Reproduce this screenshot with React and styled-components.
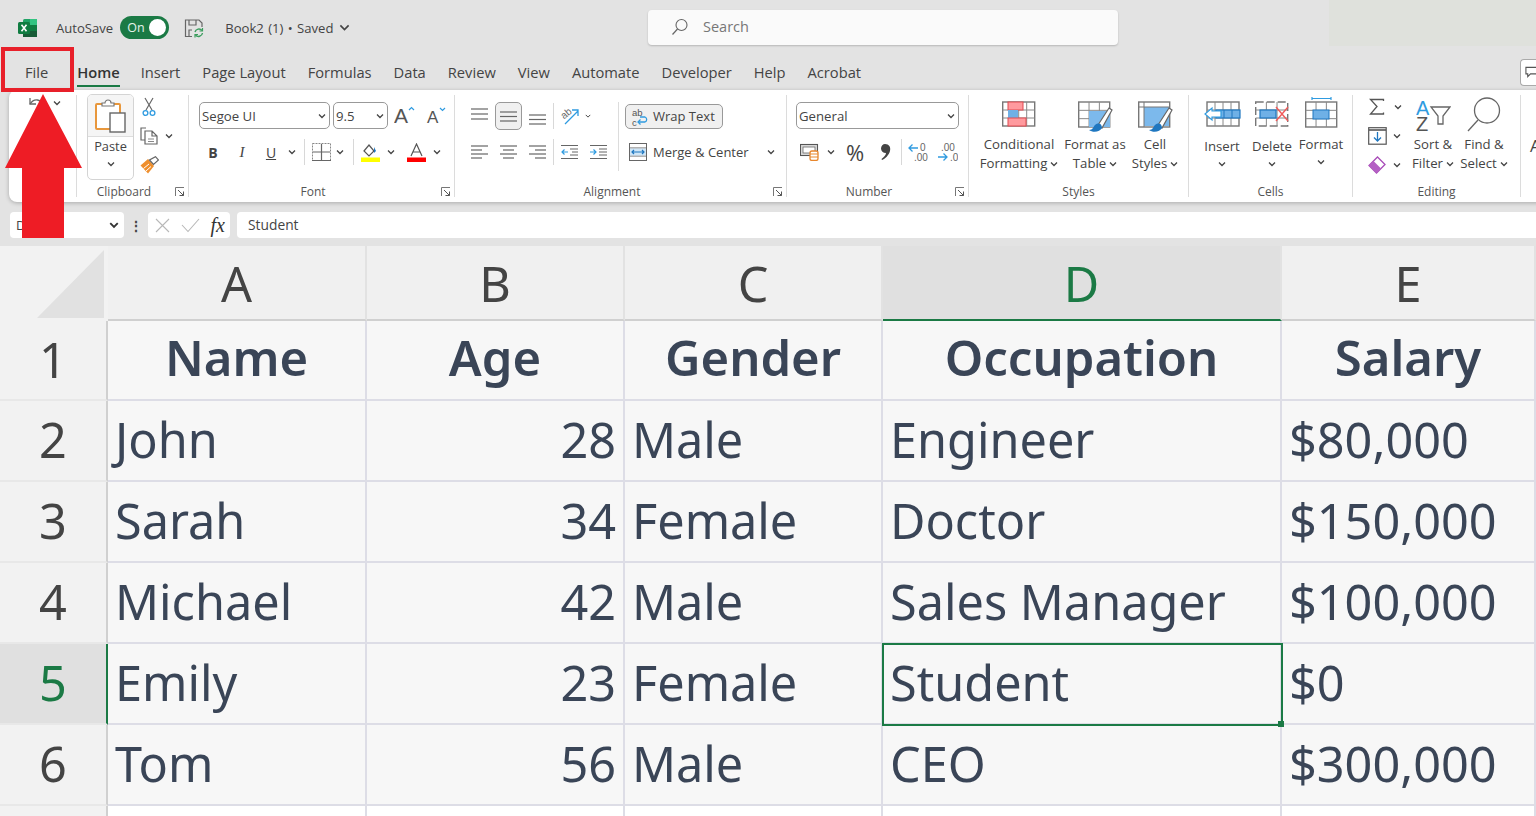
import React from 'react';
import styled, { createGlobalStyle } from 'styled-components';

const GREEN = '#1b7a45';
const BLUE = '#2f9be0';
const DKBLUE = '#1f77c0';
const ICON_FONT = 'Liberation Sans, sans-serif';

const GlobalStyle = createGlobalStyle`
    html, body {
        margin: 0;
        padding: 0;
        background: #e3e3e3;
    }
    * {
        box-sizing: border-box;
    }
`;

const Chevron = ({ size = 8, color = '#444', sw = 1.3 }) => (
    <svg width={size} height={size} viewBox="0 0 8 8" fill="none">
        <path d="M1 2.5 L4 5.5 L7 2.5" stroke={color} strokeWidth={sw} />
    </svg>
);

const ExcelLogo = () => (
    <svg width="20" height="20" viewBox="0 0 20 20">
        <rect x="5" y="1" width="14" height="18" rx="1.5" fill="#21a366" />
        <rect x="12" y="1" width="7" height="6" fill="#33c481" />
        <rect x="5" y="13" width="14" height="6" fill="#185c37" />
        <rect x="12" y="7" width="7" height="6" fill="#107c41" />
        <rect x="0" y="4" width="12" height="12" rx="1.5" fill="#107c41" />
        <path d="M3.5 6.8 L8.5 13.2 M8.5 6.8 L3.5 13.2" stroke="#fff" strokeWidth="1.6" />
    </svg>
);

const SaveIcon = () => (
    <svg width="20" height="20" viewBox="0 0 20 20" fill="none">
        <path d="M8 18.5 H1.5 V2 H15 L18 5 V9" stroke="#666" strokeWidth="1.2" />
        <path d="M5 2 V7 H12 V2 M5 18 V12 H8" stroke="#666" strokeWidth="1.2" />
        <path d="M11 14 A4 4 0 0 1 18 12.5 M18.5 15 A4 4 0 0 1 11.5 17" stroke="#3a9d5d" strokeWidth="1.4" />
        <path d="M18.5 10 V13 H15.5 M11 19.5 V16.5 H14" stroke="#3a9d5d" strokeWidth="1.2" />
    </svg>
);

const SearchIcon = () => (
    <svg width="18" height="18" viewBox="0 0 18 18" fill="none">
        <circle cx="10.5" cy="7" r="5.5" stroke="#666" strokeWidth="1.1" />
        <path d="M6.5 11 L1.5 16.5" stroke="#666" strokeWidth="1.2" />
    </svg>
);

const CommentIcon = () => (
    <svg width="12" height="14" viewBox="0 0 12 14" fill="none">
        <path d="M1 2 H16 V9 H6 L3 12 V9 H1 Z" stroke="#555" strokeWidth="1.2" />
    </svg>
);

const UndoIcon = () => (
    <svg width="18" height="12" viewBox="0 0 18 12" fill="none">
        <path d="M2 1 V7 H8" stroke="#666" strokeWidth="1.3" />
        <path d="M2 7 C6 1 13 1 17 11" stroke="#666" strokeWidth="1.3" />
    </svg>
);

const PasteIcon = () => (
    <svg width="33" height="34" viewBox="0 0 33 34" fill="none">
        <rect x="2" y="5" width="24" height="25" rx="1" stroke="#e8973c" strokeWidth="2" fill="#fff" />
        <path d="M8 7 V4 H11 A3 3 0 0 1 17 4 H20 V7 Z" stroke="#777" strokeWidth="1.2" fill="#fff" />
        <rect x="16" y="14" width="15" height="19" fill="#fff" stroke="#666" strokeWidth="1.4" />
    </svg>
);

const ScissorsIcon = () => (
    <svg width="14" height="20" viewBox="0 0 14 20" fill="none">
        <path d="M3 1 L10 13 M11 1 L4 13" stroke="#666" strokeWidth="1.2" />
        <circle cx="3.5" cy="16" r="2.4" stroke={BLUE} strokeWidth="1.3" />
        <circle cx="10.5" cy="16" r="2.4" stroke={BLUE} strokeWidth="1.3" />
    </svg>
);

const CopyIcon = () => (
    <svg width="18" height="18" viewBox="0 0 18 18" fill="none">
        <path d="M6 1 H1 V13 H5" stroke="#666" strokeWidth="1.2" />
        <path d="M5 4 H12 L17 9 V17 H5 Z M12 4 V9 H17" stroke="#666" strokeWidth="1.2" fill="#fff" />
        <path d="M8 12 H14 M8 14.5 H14" stroke="#888" strokeWidth="1" />
    </svg>
);

const BrushIcon = () => (
    <svg width="19" height="18" viewBox="0 0 19 18" fill="none">
        <path d="M0.5 9.5 L8 3 L14 10 L8 17.5 Z" fill="#ef8f2d" />
        <path d="M3.5 12.5 L9 8 M6 15 L11 10.5" stroke="#fff" strokeWidth="1" />
        <path d="M9.5 4 L13.5 8.5 L18.5 4 L15.5 0.7 Z" fill="#fff" stroke="#666" strokeWidth="1.2" />
    </svg>
);

const Launcher = () => (
    <svg width="10" height="10" viewBox="0 0 10 10" fill="none">
        <path d="M0.5 9 V0.5 H9" stroke="#777" strokeWidth="1" />
        <path d="M3 3 L8.5 8.5 M8.5 4.5 V8.5 H4.5" stroke="#555" strokeWidth="1" />
    </svg>
);

const BordersIcon = () => (
    <svg width="19" height="18" viewBox="0 0 19 18" fill="none">
        <rect x="0.5" y="0.5" width="18" height="17" stroke="#888" strokeWidth="1" strokeDasharray="2 1" />
        <path d="M9.5 1 V17 M1 9 H18" stroke="#666" strokeWidth="1.2" />
        <path d="M0 17.5 H19" stroke="#666" strokeWidth="1" />
    </svg>
);

const FillIcon = () => (
    <svg width="19" height="19" viewBox="0 0 19 19" fill="none">
        <path d="M3 8 L8 2 L13 8 L8 13 Z" stroke="#555" strokeWidth="1.2" fill="#fff" />
        <path d="M13 4 L15 8 L13 10 Z" fill={DKBLUE} />
        <rect x="0" y="14.5" width="19" height="4.5" fill="#ffff00" />
    </svg>
);

const FontColorIcon = () => (
    <svg width="19" height="19" viewBox="0 0 19 19" fill="none">
        <path d="M4 13 L9.5 1 L15 13 M6 9 H13" stroke="#555" strokeWidth="1.2" />
        <rect x="0" y="14.5" width="19" height="4.5" fill="#ff0000" />
    </svg>
);

const SIZE_ARROW = { up: 'M15 8 L17.5 5.5 L20 8', down: 'M15 6 L17.5 8.5 L20 6' };

const FontSizeIcon = ({ dir, size }) => (
    <svg width="21" height="28" viewBox="0 0 21 28" fill="none">
        <text x={size > 18 ? 0 : 2} y="21" fontFamily={ICON_FONT} fontSize={size} fill="#555">A</text>
        <path d={SIZE_ARROW[dir]} stroke={BLUE} strokeWidth="1.2" />
    </svg>
);

const ALIGN_V = { top: [2, 7, 12], mid: [5, 9.5, 14], bottom: [8, 12.5, 17] };

const VAlignIcon = ({ pos }) => (
    <svg width="17" height="18" viewBox="0 0 17 18" fill="none">
        {ALIGN_V[pos].map((y) => (
            <path key={y} d={`M0 ${y} H17`} stroke="#666" strokeWidth="1.2" />
        ))}
    </svg>
);

const ALIGN_H = {
    left: ['M0 2 H17', 'M0 6 H11', 'M0 10 H17', 'M0 14 H11'],
    center: ['M0 2 H17', 'M3 6 H14', 'M0 10 H17', 'M3 14 H14'],
    right: ['M0 2 H17', 'M6 6 H17', 'M0 10 H17', 'M6 14 H17'],
};

const HAlignIcon = ({ pos }) => (
    <svg width="17" height="16" viewBox="0 0 17 16" fill="none">
        {ALIGN_H[pos].map((d) => (
            <path key={d} d={d} stroke="#666" strokeWidth="1.2" />
        ))}
    </svg>
);

const OrientationIcon = () => (
    <svg width="24" height="26" viewBox="0 0 24 26" fill="none">
        <text x="3" y="14" fontFamily={ICON_FONT} fontSize="10" fill="#666" transform="rotate(-40 8 11)">ab</text>
        <path d="M7 21 L20 8 M14 7 H20 V13" stroke={BLUE} strokeWidth="1.3" />
    </svg>
);

const IndentIcon = ({ dir }) => (
    <svg width="17" height="16" viewBox="0 0 17 16" fill="none">
        <path d="M0 1.5 H17 M0 14.5 H17" stroke="#666" strokeWidth="1.2" />
        {dir === 'dec' ? (
            <>
                <path d="M9 5 H17 M11 8 H17 M9 11 H17" stroke="#666" strokeWidth="1" />
                <path d="M1 8 H7 M3.5 5.5 L1 8 L3.5 10.5" stroke={BLUE} strokeWidth="1.2" />
            </>
        ) : (
            <>
                <path d="M9 5 H17 M9 8 H17 M9 11 H17" stroke="#666" strokeWidth="1" />
                <path d="M0 8 H6 M3.5 5.5 L6 8 L3.5 10.5" stroke={BLUE} strokeWidth="1.2" />
            </>
        )}
    </svg>
);

const WrapIcon = () => (
    <svg width="18" height="22" viewBox="0 0 18 22" fill="none">
        <text x="1" y="9.5" fontFamily={ICON_FONT} fontSize="9.5" fill="#555">ab</text>
        <text x="1" y="20" fontFamily={ICON_FONT} fontSize="9.5" fill="#555">c</text>
        <path d="M7 16 H14 A2.7 2.7 0 0 0 14 11 H9" stroke={BLUE} strokeWidth="1.3" />
        <path d="M9.5 13.5 L7 16 L9.5 18.5" stroke={BLUE} strokeWidth="1.3" />
    </svg>
);

const MergeIcon = () => (
    <svg width="18" height="18" viewBox="0 0 18 18" fill="none">
        <rect x="0.5" y="0.5" width="17" height="17" stroke="#666" strokeWidth="1" />
        <path d="M0 5 H18 M0 13 H18" stroke="#666" strokeWidth="1" />
        <rect x="1" y="5.5" width="16" height="7" fill="#cfe6f7" />
        <path d="M3 9 H15 M5 7 L3 9 L5 11 M13 7 L15 9 L13 11" stroke={DKBLUE} strokeWidth="1.2" />
    </svg>
);

const AccountingIcon = () => (
    <svg width="19" height="18" viewBox="0 0 19 18" fill="none">
        <rect x="0.5" y="1.5" width="17" height="11" fill="#ddd" stroke="#555" strokeWidth="1.1" />
        <rect x="3" y="4" width="12" height="6" fill="#fff" stroke="#666" strokeWidth="0.8" />
        <rect x="10" y="8" width="8" height="9.5" rx="2" fill="#fff" stroke="#e8872d" strokeWidth="1.3" />
        <path d="M10 11 H18 M10 14 H18" stroke="#e8872d" strokeWidth="1.1" />
    </svg>
);

const CommaIcon = () => (
    <svg width="12" height="18" viewBox="0 0 12 18">
        <path d="M6 1 C10 1 12 4 11 8 C10 12 6 16 3 17 L2.5 16 C5 14 7 12 7 10 C4 10 2 8 2 5.5 C2 3 4 1 6 1 Z" fill="#444" />
    </svg>
);

const DecimalIcon = ({ dir }) => (
    <svg width="22" height="24" viewBox="0 0 22 24" fill="none">
        {dir === 'inc' ? (
            <>
                <text x="13" y="11" fontFamily={ICON_FONT} fontSize="10" fill="#666">0</text>
                <text x="7" y="21" fontFamily={ICON_FONT} fontSize="10" fill="#666">.00</text>
                <path d="M2 8 H11 M5.5 4.5 L2 8 L5.5 11.5" stroke={BLUE} strokeWidth="1.3" />
            </>
        ) : (
            <>
                <text x="5" y="11" fontFamily={ICON_FONT} fontSize="10" fill="#666">.00</text>
                <text x="14" y="21" fontFamily={ICON_FONT} fontSize="10" fill="#666">.0</text>
                <path d="M2 17 H11 M7.5 13.5 L11 17 L7.5 20.5" stroke={BLUE} strokeWidth="1.3" />
            </>
        )}
    </svg>
);

// cell grid used by every big icon in Styles and Cells
const SheetGrid = ({ x = 0, y = 5, w = 33, h = 25, cols = 3, rows = 3, dashed }) => {
    const lines = [];
    for (let i = 1; i < cols; i++) lines.push(`M${x + (w * i) / cols} ${y} V${y + h}`);
    for (let i = 1; i < rows; i++) lines.push(`M${x} ${y + (h * i) / rows} H${x + w}`);
    return (
        <>
            <rect x={x} y={y} width={w} height={h} fill="#fff" stroke="#777" strokeWidth="1.4" strokeDasharray={dashed ? '8 3' : undefined} />
            <path d={lines.join(' ')} stroke="#888" strokeWidth="1" />
        </>
    );
};

const ConditionalIcon = () => (
    <svg width="34" height="38" viewBox="0 0 34 38" fill="none">
        <SheetGrid x={0.7} w={32} h={24} cols={4} />
        <rect x="6" y="5" width="15" height="8" fill="#ff9a9e" stroke="#e04a50" strokeWidth="1" />
        <rect x="6" y="13" width="10" height="8" fill="#6fb0e6" />
        <rect x="6" y="21" width="18" height="8" fill="#ff9a9e" stroke="#e04a50" strokeWidth="1" />
    </svg>
);

const Paintbrush = () => (
    <>
        <path d="M20 28 L31 11 L34 13 L24 31 Z" fill="#fff" stroke="#666" strokeWidth="1.2" />
        <path d="M17 28 C21 25 24 27 24 31 C22 35 15 36 11 33 C15 33 15 30 17 28 Z" fill={DKBLUE} />
    </>
);

const TableIcon = () => (
    <svg width="35" height="38" viewBox="0 0 35 38" fill="none">
        <SheetGrid x={0.7} w={31} h={25} cols={3} />
        <rect x="11" y="14" width="21" height="16" fill="#7cb9ec" />
        <Paintbrush />
    </svg>
);

const CellStyleIcon = () => (
    <svg width="35" height="38" viewBox="0 0 35 38" fill="none">
        <rect x="0.7" y="5" width="31" height="25" fill="#fff" stroke="#777" strokeWidth="1.4" />
        <rect x="6" y="10" width="25" height="19" fill="#7cb9ec" />
        <path d="M0 10 H32 M6 5 V30" stroke="#777" strokeWidth="1" />
        <Paintbrush />
    </svg>
);

const InsertCellsIcon = () => (
    <svg width="37" height="38" viewBox="0 0 37 38" fill="none">
        <SheetGrid x={3} w={32} h={24} cols={4} />
        <rect x="12" y="13" width="24" height="8" fill="#6fb0e6" stroke={DKBLUE} strokeWidth="1.2" />
        <path d="M20 13 V21 M28 13 V21" stroke={DKBLUE} strokeWidth="1" />
        <path d="M17 14 H8 V11 L1 17 L8 23 V20 H17 Z" fill="#fff" stroke={BLUE} strokeWidth="1.2" />
    </svg>
);

const DeleteCellsIcon = () => (
    <svg width="35" height="38" viewBox="0 0 35 38" fill="none">
        <SheetGrid x={0.7} w={32} h={24} cols={3} dashed />
        <rect x="5" y="13" width="16" height="8" fill="#6fb0e6" stroke={DKBLUE} strokeWidth="1.2" />
        <path d="M21 10 L33 24 M33 10 L21 24" stroke="#f05a5a" strokeWidth="1.4" />
    </svg>
);

const FormatCellsIcon = () => (
    <svg width="33" height="38" viewBox="0 0 33 38" fill="none">
        <SheetGrid x={0.7} w={31} h={25} cols={3} />
        <rect x="8" y="13" width="16" height="9" fill="#6fb0e6" stroke={DKBLUE} strokeWidth="1" />
        <path d="M7 0 V3 M26 0 V3 M7 1.5 H26" stroke={BLUE} strokeWidth="1.2" />
    </svg>
);

const SumIcon = () => (
    <svg width="16" height="18" viewBox="0 0 16 18" fill="none">
        <path d="M14.5 3 V1.5 H1.5 L8 8.5 L1.5 16 H14.5 V14.5" stroke="#555" strokeWidth="1.3" />
    </svg>
);

const FillDownIcon = () => (
    <svg width="19" height="18" viewBox="0 0 19 18" fill="none">
        <rect x="0.7" y="0.7" width="17.5" height="16.5" stroke="#555" strokeWidth="1.2" />
        <path d="M1 3 H18" stroke="#555" strokeWidth="1.6" />
        <path d="M9.5 5 V14 M6 10.5 L9.5 14 L13 10.5" stroke={DKBLUE} strokeWidth="1.3" />
    </svg>
);

const EraserIcon = () => (
    <svg width="18" height="18" viewBox="0 0 18 18" fill="none">
        <path d="M9.5 1 L17 8.5 L8.5 17 L1 9.5 Z" fill="#fff" stroke="#a84bb8" strokeWidth="1.3" />
        <path d="M5.5 5 L13 12.5 L8.5 17 L1 9.5 Z" fill="#b460c4" />
    </svg>
);

const SortFilterIcon = () => (
    <svg width="35" height="40" viewBox="0 0 35 40" fill="none">
        <text x="0" y="17" fontFamily={ICON_FONT} fontSize="20" fill={BLUE}>A</text>
        <text x="0" y="33" fontFamily={ICON_FONT} fontSize="20" fill="#555">Z</text>
        <path d="M15 9 H34 L27 18 V26 H22 V18 Z" stroke="#666" strokeWidth="1.3" />
    </svg>
);

const FindIcon = () => (
    <svg width="34" height="35" viewBox="0 0 34 35" fill="none">
        <circle cx="20" cy="13.5" r="12.5" stroke="#666" strokeWidth="1.3" />
        <path d="M11 23 L1 34" stroke="#666" strokeWidth="1.3" />
    </svg>
);

const CancelIcon = () => (
    <svg width="15" height="15" viewBox="0 0 15 15" fill="none">
        <path d="M1 1 L14 14 M14 1 L1 14" stroke="#b8b8b8" strokeWidth="1.1" />
    </svg>
);

const EnterIcon = () => (
    <svg width="19" height="15" viewBox="0 0 19 15" fill="none">
        <path d="M1 7 L7 13.5 L18 1" stroke="#b8b8b8" strokeWidth="1.1" />
    </svg>
);

const COLUMNS = ['A', 'B', 'C', 'D', 'E'];
const ROWS = [
    ['Name', 'Age', 'Gender', 'Occupation', 'Salary'],
    ['John', '28', 'Male', 'Engineer', '$80,000'],
    ['Sarah', '34', 'Female', 'Doctor', '$150,000'],
    ['Michael', '42', 'Male', 'Sales Manager', '$100,000'],
    ['Emily', '23', 'Female', 'Student', '$0'],
    ['Tom', '56', 'Male', 'CEO', '$300,000'],
];
const TABS = ['Insert', 'Page Layout', 'Formulas', 'Data', 'Review', 'View', 'Automate', 'Developer', 'Help', 'Acrobat'];

export default function App() {
    return (
        <PageStyled>
            <GlobalStyle />
            <TitleBarStyled>
                <TitleLeftStyled>
                    <ExcelLogo />
                    <AutoSaveStyled>AutoSave</AutoSaveStyled>
                    <ToggleStyled>
                        On
                        <KnobStyled />
                    </ToggleStyled>
                    <SaveSlotStyled>
                        <SaveIcon />
                    </SaveSlotStyled>
                    <BookStyled>Book2 (1) • Saved</BookStyled>
                    <Chevron size={11} sw={1.2} />
                </TitleLeftStyled>
                <SearchBoxStyled>
                    <SearchIcon />
                    <SearchTextStyled>Search</SearchTextStyled>
                </SearchBoxStyled>
                <PatchStyled />
            </TitleBarStyled>

            <TabBarStyled>
                <TabStyled $file>File</TabStyled>
                <TabStyled $active>Home</TabStyled>
                {TABS.map((tab) => (
                    <TabStyled key={tab}>{tab}</TabStyled>
                ))}
                <CommentButtonStyled>
                    <CommentIcon />
                </CommentButtonStyled>
            </TabBarStyled>

            <RibbonStyled>
                <GroupStyled $w={68}>
                    <UndoRowStyled>
                        <UndoIcon />
                        <Chevron />
                    </UndoRowStyled>
                </GroupStyled>

                <GroupStyled $w={112}>
                    <GroupBodyStyled>
                        <PasteButtonStyled>
                            <PasteTopStyled>
                                <PasteIcon />
                            </PasteTopStyled>
                            <PasteLabelStyled>Paste</PasteLabelStyled>
                            <Chevron />
                        </PasteButtonStyled>
                        <StackStyled $left={5}>
                            <StackRowStyled>
                                <Slot $w={20}><ScissorsIcon /></Slot>
                            </StackRowStyled>
                            <StackRowStyled>
                                <Slot $w={20}><CopyIcon /></Slot>
                                <Slot $w={20}><Chevron /></Slot>
                            </StackRowStyled>
                            <StackRowStyled>
                                <Slot $w={20}><BrushIcon /></Slot>
                            </StackRowStyled>
                        </StackStyled>
                    </GroupBodyStyled>
                    <GroupFooter label="Clipboard" launcher />
                </GroupStyled>

                <GroupStyled $w={266}>
                    <RowsStyled $left={10}>
                        <TopRowStyled>
                            <SelectStyled $w={131}>Segoe UI<Chevron /></SelectStyled>
                            <SelectStyled $w={55} $gap={3}>9.5<Chevron /></SelectStyled>
                            <Slot $w={32}><FontSizeIcon dir="up" size={21} /></Slot>
                            <Slot $w={30}><FontSizeIcon dir="down" size={17} /></Slot>
                        </TopRowStyled>
                        <BottomRowStyled>
                            <Slot $w={28}><BoldGlyphStyled>B</BoldGlyphStyled></Slot>
                            <Slot $w={30}><ItalicGlyphStyled>I</ItalicGlyphStyled></Slot>
                            <Slot $w={28}><UnderGlyphStyled>U</UnderGlyphStyled></Slot>
                            <Slot $w={14}><Chevron /></Slot>
                            <Slot $w={10}><DividerStyled /></Slot>
                            <Slot $w={24}><BordersIcon /></Slot>
                            <Slot $w={14}><Chevron /></Slot>
                            <Slot $w={12}><DividerStyled /></Slot>
                            <Slot $w={22}><FillIcon /></Slot>
                            <Slot $w={20}><Chevron /></Slot>
                            <Slot $w={30}><FontColorIcon /></Slot>
                            <Slot $w={12}><Chevron /></Slot>
                        </BottomRowStyled>
                    </RowsStyled>
                    <GroupFooter label="Font" launcher />
                </GroupStyled>

                <GroupStyled $w={332}>
                    <GroupBodyStyled>
                        <AlignColumnStyled>
                            <TopRowStyled>
                                <Slot $w={28}><VAlignIcon pos="top" /></Slot>
                                <Slot $w={30}><SelectedBoxStyled><VAlignIcon pos="mid" /></SelectedBoxStyled></Slot>
                                <Slot $w={28}><VAlignIcon pos="bottom" /></Slot>
                                <Slot $w={4}><DividerStyled /></Slot>
                                <Slot $w={30}><OrientationIcon /></Slot>
                                <Slot $w={6}><Chevron /></Slot>
                            </TopRowStyled>
                            <BottomRowStyled>
                                <Slot $w={28}><HAlignIcon pos="left" /></Slot>
                                <Slot $w={30}><HAlignIcon pos="center" /></Slot>
                                <Slot $w={28}><HAlignIcon pos="right" /></Slot>
                                <Slot $w={4}><DividerStyled /></Slot>
                                <Slot $w={28}><IndentIcon dir="dec" /></Slot>
                                <Slot $w={30}><IndentIcon dir="inc" /></Slot>
                            </BottomRowStyled>
                        </AlignColumnStyled>
                        <WrapColumnStyled>
                            <WrapButtonStyled>
                                <WrapIcon />
                                <span>Wrap Text</span>
                            </WrapButtonStyled>
                            <MergeRowStyled>
                                <MergeIcon />
                                <MergeTextStyled>Merge &amp; Center</MergeTextStyled>
                                <Chevron />
                            </MergeRowStyled>
                        </WrapColumnStyled>
                    </GroupBodyStyled>
                    <GroupFooter label="Alignment" launcher />
                </GroupStyled>

                <GroupStyled $w={182}>
                    <RowsStyled $left={9}>
                        <TopRowStyled>
                            <SelectStyled $w={163}>General<Chevron /></SelectStyled>
                        </TopRowStyled>
                        <BottomRowStyled>
                            <Slot $w={26}><AccountingIcon /></Slot>
                            <Slot $w={18}><Chevron /></Slot>
                            <Slot $w={30}><PercentStyled>%</PercentStyled></Slot>
                            <Slot $w={30}><CommaIcon /></Slot>
                            <Slot $w={2}><DividerStyled /></Slot>
                            <Slot $w={32}><DecimalIcon dir="inc" /></Slot>
                            <Slot $w={26}><DecimalIcon dir="dec" /></Slot>
                        </BottomRowStyled>
                    </RowsStyled>
                    <GroupFooter label="Number" launcher />
                </GroupStyled>

                <GroupStyled $w={220}>
                    <GroupBodyStyled $left={3}>
                        <LargeButtonStyled $w={94}>
                            <LargeIconStyled><ConditionalIcon /></LargeIconStyled>
                            Conditional
                            <span>Formatting <Chevron /></span>
                        </LargeButtonStyled>
                        <LargeButtonStyled $w={58}>
                            <LargeIconStyled><TableIcon /></LargeIconStyled>
                            Format as
                            <span>Table <Chevron /></span>
                        </LargeButtonStyled>
                        <LargeButtonStyled $w={62}>
                            <LargeIconStyled><CellStyleIcon /></LargeIconStyled>
                            Cell
                            <span>Styles <Chevron /></span>
                        </LargeButtonStyled>
                    </GroupBodyStyled>
                    <GroupFooter label="Styles" />
                </GroupStyled>

                <GroupStyled $w={164}>
                    <GroupBodyStyled $left={8}>
                        <LargeButtonStyled $w={50} $drop={2}>
                            <LargeIconStyled><InsertCellsIcon /></LargeIconStyled>
                            Insert
                            <ChevronLineStyled><Chevron /></ChevronLineStyled>
                        </LargeButtonStyled>
                        <LargeButtonStyled $w={50} $drop={2}>
                            <LargeIconStyled><DeleteCellsIcon /></LargeIconStyled>
                            Delete
                            <ChevronLineStyled><Chevron /></ChevronLineStyled>
                        </LargeButtonStyled>
                        <LargeButtonStyled $w={48}>
                            <LargeIconStyled><FormatCellsIcon /></LargeIconStyled>
                            Format
                            <ChevronLineStyled><Chevron /></ChevronLineStyled>
                        </LargeButtonStyled>
                    </GroupBodyStyled>
                    <GroupFooter label="Cells" />
                </GroupStyled>

                <GroupStyled $w={168}>
                    <GroupBodyStyled>
                        <StackStyled $left={12} $w={42}>
                            <StackRowStyled>
                                <Slot $w={24}><SumIcon /></Slot>
                                <Slot $w={18}><Chevron /></Slot>
                            </StackRowStyled>
                            <StackRowStyled>
                                <Slot $w={24}><FillDownIcon /></Slot>
                                <Slot $w={16}><Chevron /></Slot>
                            </StackRowStyled>
                            <StackRowStyled>
                                <Slot $w={24}><EraserIcon /></Slot>
                                <Slot $w={16}><Chevron /></Slot>
                            </StackRowStyled>
                        </StackStyled>
                        <LargeButtonStyled $w={52}>
                            <LargeIconStyled $top={1}><SortFilterIcon /></LargeIconStyled>
                            Sort &amp;
                            <span>Filter <Chevron /></span>
                        </LargeButtonStyled>
                        <LargeButtonStyled $w={50}>
                            <LargeIconStyled $top={0}><FindIcon /></LargeIconStyled>
                            Find &amp;
                            <span>Select <Chevron /></span>
                        </LargeButtonStyled>
                    </GroupBodyStyled>
                    <GroupFooter label="Editing" />
                </GroupStyled>

                <GroupStyled $w={40}>
                    <NextGroupGlyphStyled>A</NextGroupGlyphStyled>
                </GroupStyled>
            </RibbonStyled>

            <FormulaBarStyled>
                <NameBoxStyled>
                    D
                    <Chevron size={10} color="#333" sw={1.5} />
                </NameBoxStyled>
                <DotsStyled>⋮</DotsStyled>
                <FormulaButtonsStyled>
                    <CancelIcon />
                    <EnterIcon />
                    <FxStyled>fx</FxStyled>
                </FormulaButtonsStyled>
                <FormulaInputStyled>Student</FormulaInputStyled>
            </FormulaBarStyled>

            <SheetStyled>
                <CornerStyled>
                    <CornerTriangleStyled />
                </CornerStyled>
                {COLUMNS.map((col) => (
                    <ColumnHeadStyled key={col} $selected={col === 'D'}>
                        {col}
                    </ColumnHeadStyled>
                ))}
                {ROWS.map((row, r) => (
                    <React.Fragment key={row[0]}>
                        <RowHeadStyled $selected={r === 4}>{r + 1}</RowHeadStyled>
                        {row.map((value, c) => (
                            <CellStyled key={c} $head={r === 0} $right={r > 0 && c === 1} $active={r === 4 && c === 3}>
                                {value}
                                {r === 4 && c === 3 && <FillHandleStyled />}
                            </CellStyled>
                        ))}
                    </React.Fragment>
                ))}
                <RowHeadStyled />
                {COLUMNS.map((col) => (
                    <EmptyCellStyled key={col} />
                ))}
            </SheetStyled>

            <FileHighlightStyled />
            <ArrowStyled width="78" height="146" viewBox="0 0 78 146">
                <polygon points="38,1 77,75 59,75 59,145 17,145 17,75 0,75" fill="#ee1c25" />
            </ArrowStyled>
        </PageStyled>
    );
}

function GroupFooter({ label, launcher }) {
    return (
        <FooterStyled>
            <GroupLabelStyled>{label}</GroupLabelStyled>
            {launcher && (
                <LauncherSlotStyled>
                    <Launcher />
                </LauncherSlotStyled>
            )}
        </FooterStyled>
    );
}

const PageStyled = styled.div`
    position: relative;
    display: flex;
    flex-direction: column;
    width: 1536px;
    height: 816px;
    overflow: hidden;
    background: #e3e3e3;
    font-family: 'Open Sans', 'Noto Sans', sans-serif;
    color: #444;
`;

const TitleBarStyled = styled.div`
    display: flex;
    flex: none;
    height: 55px;
`;

const TitleLeftStyled = styled.div`
    display: flex;
    align-items: center;
    width: 648px;
    height: 55px;
    padding-left: 18px;
`;

const AutoSaveStyled = styled.span`
    margin-left: 18px;
    font-size: 13.1px;
`;

const ToggleStyled = styled.div`
    position: relative;
    display: flex;
    align-items: center;
    width: 49px;
    height: 23px;
    margin-left: 7px;
    padding-left: 7px;
    border-radius: 12px;
    background: ${GREEN};
    color: #e6f3ea;
    font-size: 12.5px;
`;

const KnobStyled = styled.span`
    position: absolute;
    right: 3px;
    top: 3px;
    width: 17px;
    height: 17px;
    border-radius: 50%;
    background: #fff;
`;

const SaveSlotStyled = styled.div`
    display: flex;
    margin-left: 15px;
`;

const BookStyled = styled.span`
    margin: 0 6px 0 21px;
    font-size: 13.1px;
    word-spacing: 1px;
`;

const SearchBoxStyled = styled.div`
    display: flex;
    align-items: center;
    width: 470px;
    height: 35px;
    margin-top: 10px;
    padding: 0 0 2px 23px;
    border-radius: 4px;
    background: #fafafa;
    box-shadow: 0 1px 2px rgba(0, 0, 0, 0.2);
`;

const SearchTextStyled = styled.span`
    margin-left: 14px;
    color: #777;
    font-size: 14.5px;
`;

const PatchStyled = styled.div`
    width: 207px;
    height: 46px;
    margin-left: 211px;
    background: #dfe1dc;
`;

const TabBarStyled = styled.div`
    display: flex;
    flex: none;
    gap: 22px;
    align-items: center;
    height: 35px;
    padding: 0 0 1px 25px;
    font-size: 14.7px;
`;

const TabStyled = styled.div`
    position: relative;
    margin-right: ${(p) => (p.$file ? '7px' : p.$active ? '-1px' : '0')};
    font-weight: ${(p) => (p.$active ? 600 : 400)};
    color: ${(p) => (p.$active ? '#333' : '#444')};

    ${(p) =>
        p.$active &&
        `&::after {
            content: '';
            position: absolute;
            left: 0;
            right: 0;
            bottom: -5px;
            height: 2px;
            background: ${GREEN};
        }`}
`;

const CommentButtonStyled = styled.div`
    display: flex;
    align-items: center;
    width: 16px;
    height: 27px;
    margin-left: auto;
    padding-left: 4px;
    overflow: hidden;
    border: 1px solid #aaa;
    border-right: none;
    border-radius: 4px 0 0 4px;
    background: #fff;
`;

const RibbonStyled = styled.div`
    display: flex;
    flex: none;
    width: 1600px;
    height: 112px;
    margin-left: 9px;
    padding: 5px 0;
    border-radius: 8px;
    background: #fff;
    box-shadow: 0 1px 4px rgba(0, 0, 0, 0.25);
    font-size: 13.2px;
`;

const GroupStyled = styled.div`
    display: flex;
    flex: none;
    flex-direction: column;
    width: ${(p) => p.$w}px;
    border-right: 1px solid #dcdcdc;
`;

const GroupBodyStyled = styled.div`
    display: flex;
    flex: 1;
    padding-left: ${(p) => p.$left || 0}px;
`;

const RowsStyled = styled.div`
    flex: 1;
    padding-left: ${(p) => p.$left}px;
`;

const FooterStyled = styled.div`
    display: flex;
    flex: none;
    align-items: center;
    height: 14px;
    margin-bottom: -2px;
    line-height: 14px;
`;

const GroupLabelStyled = styled.div`
    flex: 1;
    text-align: center;
    font-size: 12px;
    color: #555;
`;

const LauncherSlotStyled = styled.div`
    display: flex;
    flex: none;
    justify-content: center;
    width: 17px;
`;

const UndoRowStyled = styled.div`
    display: flex;
    gap: 7px;
    align-items: center;
    padding: 2px 0 0 19px;
`;

const NextGroupGlyphStyled = styled.div`
    margin: 42px 0 0 9px;
    font-size: 17px;
    line-height: 1;
`;

const PasteButtonStyled = styled.div`
    display: flex;
    flex: none;
    flex-direction: column;
    align-items: center;
    width: 47px;
    height: 86px;
    margin: -1px 0 0 10px;
    overflow: hidden;
    border: 1px solid #d4d4d4;
    border-radius: 5px;
    line-height: 1;
`;

const PasteTopStyled = styled.div`
    display: flex;
    flex: none;
    justify-content: center;
    align-items: center;
    width: 100%;
    height: 42px;
    border-bottom: 1px solid #ddd;
    background: #f5f5f5;
`;

const PasteLabelStyled = styled.div`
    margin: 1px 0 6px;
    line-height: 16px;
    font-size: 12.8px;
`;

const StackStyled = styled.div`
    display: flex;
    flex: none;
    flex-direction: column;
    gap: 5px;
    width: ${(p) => (p.$w ? `${p.$w}px` : 'auto')};
    margin-left: ${(p) => p.$left}px;
`;

const StackRowStyled = styled.div`
    display: flex;
    align-items: center;
    height: 24px;
`;

const Slot = styled.div`
    display: flex;
    flex: none;
    justify-content: center;
    align-items: center;
    width: ${(p) => p.$w}px;
`;

const TopRowStyled = styled.div`
    display: flex;
    align-items: center;
    height: 27px;
    margin-top: 7px;
`;

const BottomRowStyled = styled.div`
    display: flex;
    align-items: center;
    height: 24px;
    margin-top: 11px;
`;

const SelectStyled = styled.div`
    display: flex;
    flex: none;
    justify-content: space-between;
    align-items: center;
    width: ${(p) => p.$w}px;
    height: 27px;
    margin-left: ${(p) => p.$gap || 0}px;
    padding: 0 3px 0 2px;
    border: 1px solid #999;
    border-radius: 5px;
    background: #fff;
    font-size: 13.2px;
`;

const DividerStyled = styled.div`
    flex: none;
    width: 1px;
    height: 26px;
    background: #d8d8d8;
`;

const BoldGlyphStyled = styled.span`
    font-size: 14px;
    font-weight: 700;
`;

const ItalicGlyphStyled = styled.span`
    font-family: 'Liberation Serif', serif;
    font-size: 15px;
    font-style: italic;
`;

const UnderGlyphStyled = styled.span`
    font-size: 14px;
    text-decoration: underline;
`;

const AlignColumnStyled = styled.div`
    flex: none;
    width: 164px;
    height: 69px;
    padding-left: 10px;
    border-right: 1px solid #dcdcdc;
    margin-top: 7px;

    & > div:first-child {
        margin-top: 0;
    }
`;

const SelectedBoxStyled = styled.div`
    display: flex;
    justify-content: center;
    align-items: center;
    width: 27px;
    height: 28px;
    border: 1px solid #999;
    border-radius: 5px;
    background: #f0f0f0;
`;

const WrapColumnStyled = styled.div`
    flex: none;
    padding-left: 6px;
`;

const WrapButtonStyled = styled.div`
    display: flex;
    gap: 4px;
    align-items: center;
    width: 98px;
    height: 25px;
    margin-top: 9px;
    padding-left: 5px;
    border: 1px solid #999;
    border-radius: 5px;
    background: #f0f0f0;
    font-size: 13px;

    & > span {
        margin-top: -2px;
    }
`;

const MergeRowStyled = styled.div`
    display: flex;
    align-items: center;
    height: 24px;
    margin-top: 11px;
    padding-left: 4px;
    font-size: 13px;
`;

const MergeTextStyled = styled.span`
    width: 114px;
    margin-left: 6px;
`;

const PercentStyled = styled.span`
    font-size: 22px;
    line-height: 1;
`;

const LargeButtonStyled = styled.div`
    display: flex;
    flex: none;
    flex-direction: column;
    align-items: center;
    width: ${(p) => p.$w}px;
    padding-top: 3px;
    line-height: 19px;
    white-space: nowrap;

    & > span {
        display: flex;
        gap: 3px;
        align-items: center;
        line-height: 19px;
    }

    & > div:first-child {
        margin-bottom: ${(p) => p.$drop || 0}px;
    }
`;

const LargeIconStyled = styled.div`
    display: flex;
    flex: none;
    justify-content: center;
    align-items: flex-start;
    height: 38px;
    margin-top: -1px;
    padding-top: ${(p) => p.$top || 0}px;
`;

const ChevronLineStyled = styled.div`
    display: flex;
    align-items: center;
    height: 16px;
`;

const FormulaBarStyled = styled.div`
    display: flex;
    flex: none;
    align-items: center;
    height: 26px;
    margin: 10px 0 8px 10px;
`;

const NameBoxStyled = styled.div`
    display: flex;
    justify-content: space-between;
    align-items: center;
    width: 114px;
    height: 26px;
    padding: 0 5px 0 6px;
    border-radius: 4px;
    background: #fff;
    font-size: 13px;
`;

const DotsStyled = styled.div`
    width: 24px;
    text-align: center;
    font-size: 14px;
    font-weight: 700;
`;

const FormulaButtonsStyled = styled.div`
    display: flex;
    justify-content: space-between;
    align-items: center;
    width: 82px;
    height: 26px;
    padding: 0 5px 0 7px;
    border-radius: 4px;
    background: #fff;
`;

const FxStyled = styled.span`
    font-family: 'Liberation Serif', serif;
    font-size: 20px;
    font-style: italic;
    color: #333;
`;

const FormulaInputStyled = styled.div`
    display: flex;
    flex: 1;
    align-items: center;
    height: 26px;
    margin-left: 7px;
    padding: 0 0 1px 11px;
    border-radius: 4px 0 0 4px;
    background: #fff;
    font-size: 13.8px;
`;

const SheetStyled = styled.div`
    display: grid;
    flex: 1;
    grid-template-columns: 108px 259px 258px 258px 399px 254px;
    grid-template-rows: 75px 80px repeat(5, 81px) 81px;
    overflow: hidden;
    background: #f7f7f7;
    font-family: 'Noto Sans', 'Open Sans', sans-serif;
    font-size: 48.6px;
    line-height: 1;
    color: #3a4557;
`;

const CornerStyled = styled.div`
    display: flex;
    justify-content: flex-end;
    padding: 4px 4px 0 0;
    background: #f2f2f2;
`;

const CornerTriangleStyled = styled.div`
    width: 67px;
    height: 68px;
    background: #e1e1e1;
    clip-path: polygon(100% 0, 100% 100%, 0 100%);
`;

const ColumnHeadStyled = styled.div`
    display: flex;
    justify-content: center;
    align-items: center;
    padding-top: 2px;
    border-right: 2px solid #e2e2e2;
    border-bottom: 2px solid ${(p) => (p.$selected ? GREEN : '#d0d0d0')};
    background: ${(p) => (p.$selected ? '#e0e0e0' : '#f0f0f0')};
    color: ${(p) => (p.$selected ? GREEN : '#444')};
`;

const RowHeadStyled = styled.div`
    display: flex;
    justify-content: center;
    align-items: center;
    padding-bottom: 2px;
    border-right: 2px solid ${(p) => (p.$selected ? GREEN : '#d0d0d0')};
    border-bottom: 2px solid #e8e8e8;
    background: ${(p) => (p.$selected ? '#e0e0e0' : '#f2f2f2')};
    color: ${(p) => (p.$selected ? GREEN : '#444')};
`;

const CellStyled = styled.div`
    position: relative;
    display: flex;
    justify-content: ${(p) => (p.$head ? 'center' : p.$right ? 'flex-end' : 'flex-start')};
    align-items: center;
    padding: 0 7px ${(p) => (p.$head ? 6 : 2)}px;
    border-right: 2px solid #dddde6;
    border-bottom: 2px solid #dddde6;
    font-size: ${(p) => (p.$head ? '49px' : 'inherit')};
    font-weight: ${(p) => (p.$head ? 600 : 400)};
    white-space: nowrap;
    ${(p) => p.$active && `outline: 2px solid ${GREEN}; outline-offset: -1px; z-index: 1;`}
`;

const FillHandleStyled = styled.span`
    position: absolute;
    right: -4px;
    bottom: -4px;
    width: 6px;
    height: 6px;
    background: ${GREEN};
`;

const EmptyCellStyled = styled.div`
    border-right: 2px solid #dddde6;
    background: #fff;
`;

const FileHighlightStyled = styled.div`
    position: absolute;
    left: 1px;
    top: 47px;
    width: 73px;
    height: 45px;
    border: 4px solid #e8202a;
`;

const ArrowStyled = styled.svg`
    position: absolute;
    left: 5px;
    top: 93px;
`;
